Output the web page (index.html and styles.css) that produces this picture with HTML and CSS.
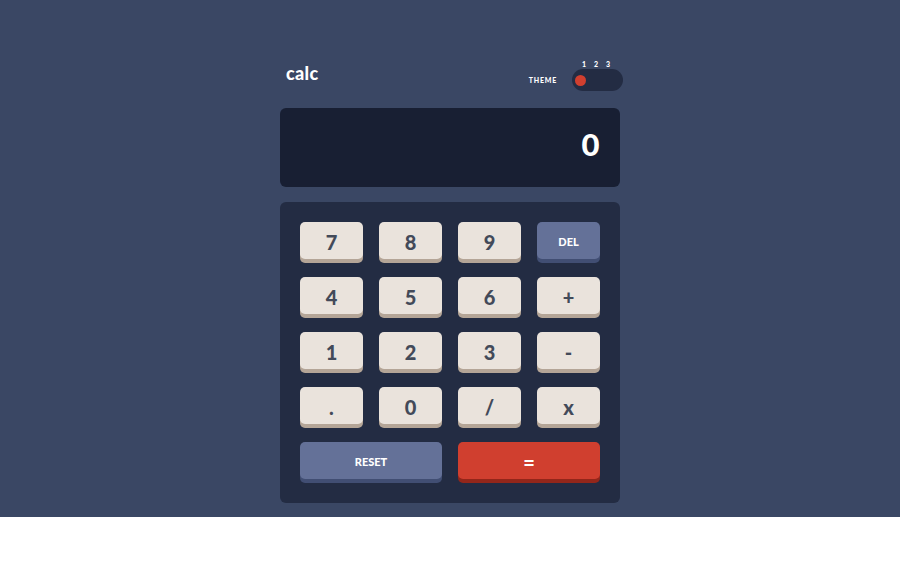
FILE: index.html
```html
<!DOCTYPE html>
<html lang="en">
<head>
<meta charset="utf-8">
<title>Calculator</title>
<link rel="stylesheet" href="styles.css">
</head>
<body>
<main class="page">
  <div class="calc">
    <header class="header">
      <h1 class="logo">calc</h1>
      <div class="theme">
        <span class="theme-label">THEME</span>
        <div class="switch-group">
          <div class="switch-nums"><span>1</span><span>2</span><span>3</span></div>
          <div class="switch"><span class="switch-dot"></span></div>
        </div>
      </div>
    </header>
    <section class="display"><span class="display-value">0</span></section>
    <section class="keypad">
      <button class="key">7</button>
      <button class="key">8</button>
      <button class="key">9</button>
      <button class="key key-alt key-small">DEL</button>
      <button class="key">4</button>
      <button class="key">5</button>
      <button class="key">6</button>
      <button class="key">+</button>
      <button class="key">1</button>
      <button class="key">2</button>
      <button class="key">3</button>
      <button class="key">-</button>
      <button class="key">.</button>
      <button class="key">0</button>
      <button class="key">/</button>
      <button class="key">x</button>
      <button class="key key-alt key-small key-wide">RESET</button>
      <button class="key key-eq key-wide">=</button>
    </section>
  </div>
</main>
</body>
</html>
```

FILE: styles.css
```css
* { box-sizing: border-box; }
html, body { margin: 0; padding: 0; background: #ffffff; }
body { font-family: "Lato", "DejaVu Sans", sans-serif; }

.page {
  background: #3a4764;
  padding: 60px 0 14px;
  display: flex;
  justify-content: center;
}

.calc { width: 340px; }

.header {
  height: 31px;
  margin-bottom: 17px;
  display: flex;
  justify-content: space-between;
  align-items: flex-start;
  padding-left: 6px;
}

.logo {
  margin: 0;
  padding-top: 3px;
  color: #ffffff;
  font-size: 18px;
  line-height: 20px;
  font-weight: 900;
  letter-spacing: 0.3px;
}

.theme {
  display: flex;
  align-items: flex-end;
  margin-right: -3px;
}

.theme-label {
  color: #ffffff;
  font-size: 7px;
  font-weight: 900;
  letter-spacing: 0.8px;
  line-height: 22px;
  margin-right: 15px;
}

.switch-group {
  width: 51px;
  display: flex;
  flex-direction: column;
}

.switch-nums {
  height: 9px;
  display: flex;
  justify-content: space-between;
  padding: 0 13px 0 10px;
  color: #ffffff;
  font-size: 7px;
  font-weight: 900;
  line-height: 9px;
}

.switch {
  height: 22px;
  border-radius: 11px;
  background: #232c43;
  display: flex;
  align-items: center;
  padding-left: 3px;
}

.switch-dot {
  width: 11px;
  height: 11px;
  border-radius: 50%;
  background: #d03f2f;
}

.display {
  height: 79px;
  border-radius: 6px;
  background: #181f33;
  display: flex;
  align-items: center;
  justify-content: flex-end;
  padding: 0 20px 6px 20px;
}

.display-value {
  color: #ffffff;
  font-size: 31px;
  font-weight: 900;
  line-height: 1;
  letter-spacing: 0.5px;
}

.keypad {
  margin-top: 15px;
  background: #232c43;
  border-radius: 6px;
  padding: 20px 20px 24px;
  display: grid;
  grid-template-columns: repeat(4, 63px);
  grid-auto-rows: 37px;
  column-gap: 16px;
  row-gap: 18px;
}

.key {
  border: none;
  border-radius: 5px;
  background: #eae3dc;
  box-shadow: 0 4px 0 #b4a597;
  color: #434a59;
  font-family: inherit;
  font-size: 20px;
  font-weight: 900;
  line-height: 1;
  padding: 3px 0 0;
  display: flex;
  align-items: center;
  justify-content: center;
}

.key-small { font-size: 11px; padding-top: 1px; letter-spacing: 0; }

.key-alt {
  background: #647198;
  box-shadow: 0 4px 0 #414e73;
  color: #ffffff;
}

.key-eq {
  background: #d03f2f;
  box-shadow: 0 4px 0 #93261a;
  color: #ffffff;
}

.key-wide { grid-column: span 2; }
```
